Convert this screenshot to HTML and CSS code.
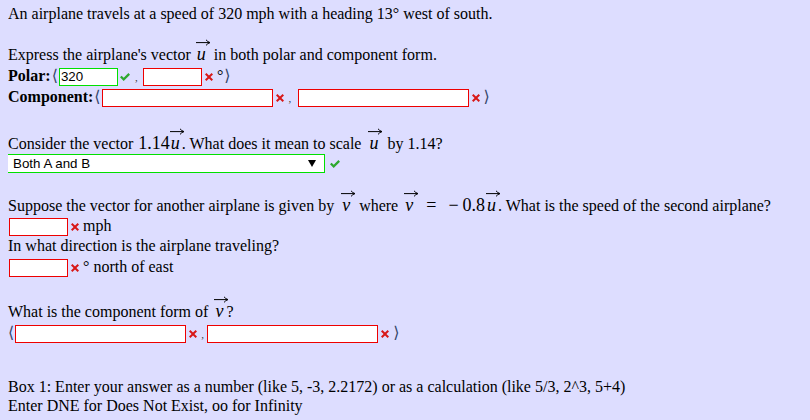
FILE: index.html
```html
<!DOCTYPE html>
<html>
<head>
<meta charset="utf-8">
<link rel="stylesheet" href="styles.css">
</head>
<body>
<div class="q">
  <div class="ln l20">An airplane travels at a speed of 320 mph with a heading 13° west of south.</div>
  <div class="ln l20"></div>
  <div class="ln l21">Express the airplane's vector <span class="vec vu">u<svg class="arr" viewBox="0 0 16 7" width="16" height="7"><path d="M1 3.6H14.6M11 0.8Q12.6 2.8 15 3.6Q12.6 4.4 11 6.4"/></svg></span> in both polar and component form.</div>
  <div class="ln l21"><b>Polar:</b><span class="ang al">⟨</span><input class="ans ok sm" value="320"><svg class="ic chk" viewBox="0 0 10 8" width="10" height="8"><path d="M0 4.3L1.6 2.7L3.7 4.8L8.4 0.1L10 1.7L3.7 8Z"/></svg><span class="sep s15">,</span><input class="ans bad sm"><svg class="ic crs" viewBox="0 0 8 8" width="8" height="8"><path d="M0 1.4L1.4 0L4 2.6L6.6 0L8 1.4L5.4 4L8 6.6L6.6 8L4 5.4L1.4 8L0 6.6L2.6 4Z"/></svg><span class="deg">°</span><span class="ang ar">⟩</span></div>
  <div class="ln l21"><b>Component:</b><span class="ang al">⟨</span><input class="ans bad lg"><svg class="ic crs" viewBox="0 0 8 8" width="8" height="8"><path d="M0 1.4L1.4 0L4 2.6L6.6 0L8 1.4L5.4 4L8 6.6L6.6 8L4 5.4L1.4 8L0 6.6L2.6 4Z"/></svg><span class="sep s14">,</span><input class="ans bad lg"><svg class="ic crs" viewBox="0 0 8 8" width="8" height="8"><path d="M0 1.4L1.4 0L4 2.6L6.6 0L8 1.4L5.4 4L8 6.6L6.6 8L4 5.4L1.4 8L0 6.6L2.6 4Z"/></svg><span class="ang ar2">⟩</span></div>

  <div class="ln l21 gap26">Consider the vector <span class="m num">1.14</span><span class="vec vu2">u<svg class="arr" viewBox="0 0 16 7" width="16" height="7"><path d="M1 3.6H14.6M11 0.8Q12.6 2.8 15 3.6Q12.6 4.4 11 6.4"/></svg></span>. What does it mean to scale <span class="vec vu3">u<svg class="arr" viewBox="0 0 16 7" width="16" height="7"><path d="M1 3.6H14.6M11 0.8Q12.6 2.8 15 3.6Q12.6 4.4 11 6.4"/></svg></span> by 1.14?</div>
  <div class="ln selrow"><div class="select ok"><span class="seltext">Both A and B</span><span class="tri"></span></div><svg class="ic chk selchk" viewBox="0 0 10 8" width="10" height="8"><path d="M0 4.3L1.6 2.7L3.7 4.8L8.4 0.1L10 1.7L3.7 8Z"/></svg></div>

  <div class="ln l20 gap22">Suppose the vector for another airplane is given by <span class="vec vv">v<svg class="arr" viewBox="0 0 16 7" width="16" height="7"><path d="M1 3.6H14.6M11 0.8Q12.6 2.8 15 3.6Q12.6 4.4 11 6.4"/></svg></span> where <span class="vec vv2">v<svg class="arr" viewBox="0 0 16 7" width="16" height="7"><path d="M1 3.6H14.6M11 0.8Q12.6 2.8 15 3.6Q12.6 4.4 11 6.4"/></svg></span><span class="m eq">=</span><span class="m minus">−</span><span class="m num08">0.8</span><span class="vec vu4">u<svg class="arr" viewBox="0 0 16 7" width="16" height="7"><path d="M1 3.6H14.6M11 0.8Q12.6 2.8 15 3.6Q12.6 4.4 11 6.4"/></svg></span>. What is the speed of the second airplane?</div>
  <div class="ln l21"><input class="ans bad sm ind"><svg class="ic crs" viewBox="0 0 8 8" width="8" height="8"><path d="M0 1.4L1.4 0L4 2.6L6.6 0L8 1.4L5.4 4L8 6.6L6.6 8L4 5.4L1.4 8L0 6.6L2.6 4Z"/></svg> mph</div>
  <div class="ln l20">In what direction is the airplane traveling?</div>
  <div class="ln l21"><input class="ans bad sm ind"><svg class="ic crs" viewBox="0 0 8 8" width="8" height="8"><path d="M0 1.4L1.4 0L4 2.6L6.6 0L8 1.4L5.4 4L8 6.6L6.6 8L4 5.4L1.4 8L0 6.6L2.6 4Z"/></svg> ° north of east</div>

  <div class="ln l21 gap24">What is the component form of <span class="vec vv3">v<svg class="arr" viewBox="0 0 16 7" width="16" height="7"><path d="M1 3.6H14.6M11 0.8Q12.6 2.8 15 3.6Q12.6 4.4 11 6.4"/></svg></span>?</div>
  <div class="ln l21"><span class="ang al0">⟨</span><input class="ans bad lg"><svg class="ic crs" viewBox="0 0 8 8" width="8" height="8"><path d="M0 1.4L1.4 0L4 2.6L6.6 0L8 1.4L5.4 4L8 6.6L6.6 8L4 5.4L1.4 8L0 6.6L2.6 4Z"/></svg><span class="sep s10">,</span><input class="ans bad lg"><svg class="ic crs" viewBox="0 0 8 8" width="8" height="8"><path d="M0 1.4L1.4 0L4 2.6L6.6 0L8 1.4L5.4 4L8 6.6L6.6 8L4 5.4L1.4 8L0 6.6L2.6 4Z"/></svg><span class="ang ar2">⟩</span></div>

  <div class="ln l19 gap34">Box 1: Enter your answer as a number (like 5, -3, 2.2172) or as a calculation (like 5/3, 2^3, 5+4)</div>
  <div class="ln l19">Enter DNE for Does Not Exist, oo for Infinity</div>
</div>
</body>
</html>
```

FILE: styles.css
```css
html, body {
  background: #ddddff;
}
body {
  margin: 4px 8px 0 8px;
  font-family: "Liberation Serif", "Times New Roman", serif;
  font-size: 16px;
  color: #000;
}
.ln {
  white-space: nowrap;
}
.l19 { height: 19px; line-height: 19px; }
.l20 { height: 20px; line-height: 20px; }
.l21 { height: 21px; line-height: 21px; }
.gap26 { margin-top: 26px; }
.gap22 { margin-top: 22px; }
.gap24 { margin-top: 24px; }
.gap34 { margin-top: 34px; }

.vec {
  position: relative;
  display: inline-block;
  font-style: italic;
  font-size: 18px;
  line-height: 16px;
}
.arr {
  position: absolute;
  left: -2px;
  top: -7px;
  fill: none;
  stroke: #000;
  stroke-width: 1;
}
.vu { margin-left: 2px; margin-right: 4px; }
.vu2 { margin-left: 1px; margin-right: 2px; }
.vu3 { margin-left: 4px; margin-right: 5px; }
.vu4 { margin-left: 2px; margin-right: 2px; }
.vv { margin-left: 4px; margin-right: 5px; }
.vv2 { margin-left: 3px; }
.vv3 { margin-left: 3px; margin-right: 3px; }
.m { font-size: 18px; }
.num { margin-left: 1px; }
.eq { margin-left: 13px; }
.minus { margin-left: 12px; }
.num08 { margin-left: 4px; }

.ang {
  font-family: "DejaVu Sans", sans-serif;
  font-size: 16px;
  color: #34456a;
}
.al { margin-left: 1px; margin-right: 1px; }
.al0 { margin-left: 0; margin-right: 1px; }
.ar { margin-left: 1px; }
.ar2 { margin-left: 4px; }

.ans {
  box-sizing: border-box;
  height: 18px;
  margin: 0;
  padding: 0 1px;
  font-family: "Liberation Sans", Arial, sans-serif;
  font-size: 13.33px;
  color: #000;
  background: #fff;
  outline: none;
  vertical-align: baseline;
}
.sm { width: 59px; }
.lg { width: 171px; }
.ind { margin-left: 1px; }
.ok { border: 1px solid #00e000; }
.bad { border: 1px solid #ee0000; }

.ic { vertical-align: baseline; }
.chk { fill: #2ea82e; margin-left: 2px; }
.crs { fill: #d81818; margin-left: 3px; }

.sep {
  display: inline-block;
  font-size: 11px;
  color: #333;
  padding-left: 5px;
  box-sizing: border-box;
}
.s15 { width: 13px; }
.s14 { width: 14px; }
.s10 { width: 10px; padding-left: 4px; }
.deg { margin-left: 4px; }

.selrow {
  height: 19px;
  display: flex;
  align-items: center;
  margin-left: -1px;
}
.select {
  box-sizing: border-box;
  width: 318px;
  height: 19px;
  display: flex;
  align-items: center;
  justify-content: space-between;
  padding: 0 8px 0 5px;
  background: #fff;
  font-family: "Liberation Sans", Arial, sans-serif;
  font-size: 13.33px;
}
.tri {
  width: 0;
  height: 0;
  border-left: 4px solid transparent;
  border-right: 4px solid transparent;
  border-top: 7px solid #000;
}
.selchk { margin-left: 5px; }
```
